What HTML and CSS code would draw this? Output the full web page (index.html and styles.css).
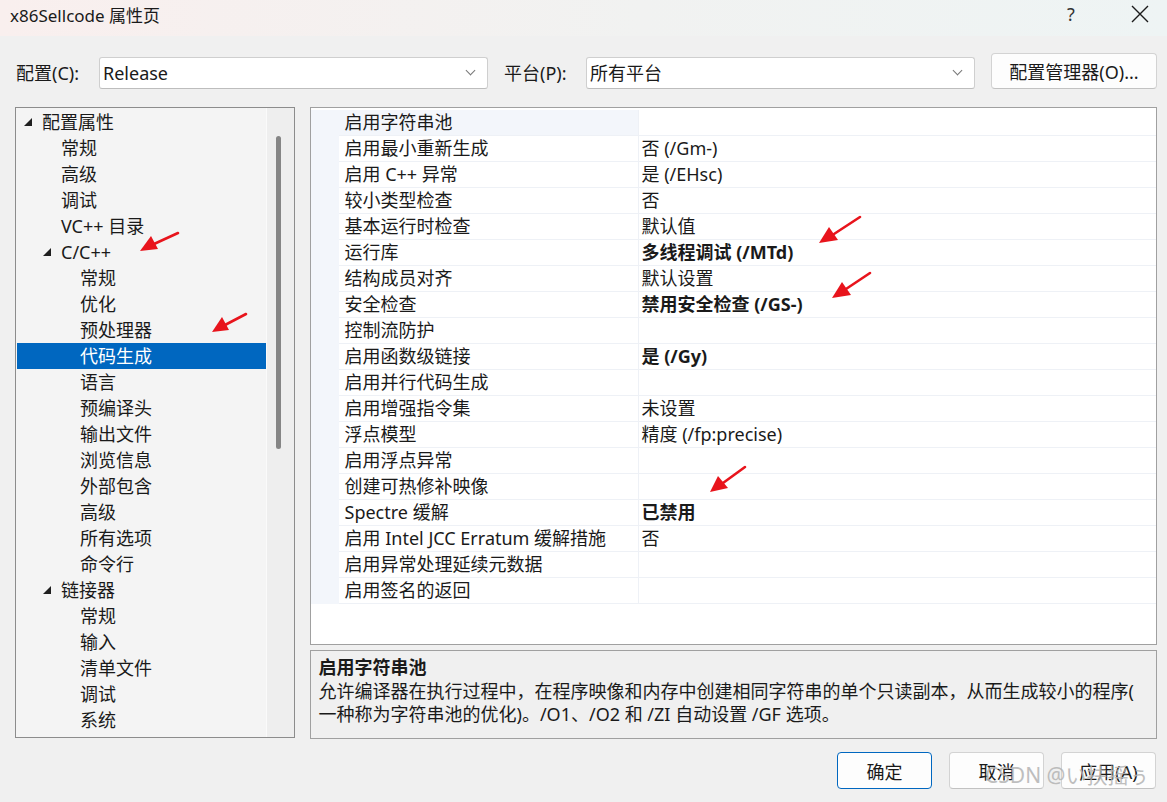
FILE: index.html
```html
<!DOCTYPE html>
<html lang="zh-CN">
<head>
  <meta charset="UTF-8">
  <title>x86Sellcode 属性页</title>
  <link rel="stylesheet" href="styles.css">
</head>
<body>

  <!-- 标题栏 -->
  <div class="titlebar">
    <span class="title">x86Sellcode 属性页</span>
    <span class="help">?</span>
    <span class="close">
      <svg width="18" height="18" viewBox="0 0 18 18"><path d="M1 1 L17 17 M17 1 L1 17" stroke="#1b1b1b" stroke-width="1.4" fill="none"/></svg>
    </span>
  </div>

  <!-- 配置 / 平台 -->
  <div class="toolbar">
    <label class="lbl">配置(C):</label>
    <div class="combo combo-cfg">Release<span class="chev"></span></div>
    <label class="lbl lbl-plat">平台(P):</label>
    <div class="combo combo-plat">所有平台<span class="chev"></span></div>
    <button class="btn btn-mgr">配置管理器(O)...</button>
  </div>

  <div class="main">
    <!-- 左侧树 -->
    <div class="tree">
      <ul class="tree-list">
        <li class="l0"><span class="tri"></span>配置属性</li>
        <li class="l1">常规</li>
        <li class="l1">高级</li>
        <li class="l1">调试</li>
        <li class="l1">VC++ 目录</li>
        <li class="l1"><span class="tri"></span>C/C++</li>
        <li class="l2">常规</li>
        <li class="l2">优化</li>
        <li class="l2">预处理器</li>
        <li class="l2 sel">代码生成</li>
        <li class="l2">语言</li>
        <li class="l2">预编译头</li>
        <li class="l2">输出文件</li>
        <li class="l2">浏览信息</li>
        <li class="l2">外部包含</li>
        <li class="l2">高级</li>
        <li class="l2">所有选项</li>
        <li class="l2">命令行</li>
        <li class="l1"><span class="tri"></span>链接器</li>
        <li class="l2">常规</li>
        <li class="l2">输入</li>
        <li class="l2">清单文件</li>
        <li class="l2">调试</li>
        <li class="l2">系统</li>
      </ul>
      <div class="vscroll"><div class="thumb"></div></div>
    </div>

    <!-- 右侧属性表 + 说明 -->
    <div class="right">
      <div class="grid">
        <div class="row cur"><span class="gut"></span><span class="name">启用字符串池</span><span class="val"></span></div>
        <div class="row"><span class="gut"></span><span class="name">启用最小重新生成</span><span class="val">否 (/Gm-)</span></div>
        <div class="row"><span class="gut"></span><span class="name">启用 C++ 异常</span><span class="val">是 (/EHsc)</span></div>
        <div class="row"><span class="gut"></span><span class="name">较小类型检查</span><span class="val">否</span></div>
        <div class="row"><span class="gut"></span><span class="name">基本运行时检查</span><span class="val">默认值</span></div>
        <div class="row"><span class="gut"></span><span class="name">运行库</span><span class="val b">多线程调试 (/MTd)</span></div>
        <div class="row"><span class="gut"></span><span class="name">结构成员对齐</span><span class="val">默认设置</span></div>
        <div class="row"><span class="gut"></span><span class="name">安全检查</span><span class="val b">禁用安全检查 (/GS-)</span></div>
        <div class="row"><span class="gut"></span><span class="name">控制流防护</span><span class="val"></span></div>
        <div class="row"><span class="gut"></span><span class="name">启用函数级链接</span><span class="val b">是 (/Gy)</span></div>
        <div class="row"><span class="gut"></span><span class="name">启用并行代码生成</span><span class="val"></span></div>
        <div class="row"><span class="gut"></span><span class="name">启用增强指令集</span><span class="val">未设置</span></div>
        <div class="row"><span class="gut"></span><span class="name">浮点模型</span><span class="val">精度 (/fp:precise)</span></div>
        <div class="row"><span class="gut"></span><span class="name">启用浮点异常</span><span class="val"></span></div>
        <div class="row"><span class="gut"></span><span class="name">创建可热修补映像</span><span class="val"></span></div>
        <div class="row"><span class="gut"></span><span class="name">Spectre 缓解</span><span class="val b">已禁用</span></div>
        <div class="row"><span class="gut"></span><span class="name">启用 Intel JCC Erratum 缓解措施</span><span class="val">否</span></div>
        <div class="row"><span class="gut"></span><span class="name">启用异常处理延续元数据</span><span class="val"></span></div>
        <div class="row"><span class="gut"></span><span class="name">启用签名的返回</span><span class="val"></span></div>
      </div>
      <div class="desc">
        <div class="desc-title">启用字符串池</div>
        <div class="desc-text">允许编译器在执行过程中，在程序映像和内存中创建相同字符串的单个只读副本，从而生成较小的程序(<br>一种称为字符串池的优化)。/O1、/O2 和 /ZI 自动设置 /GF 选项。</div>
      </div>
    </div>
  </div>

  <!-- 底部按钮 -->
  <div class="footer">
    <button class="btn btn-ok">确定</button>
    <button class="btn">取消</button>
    <button class="btn">应用(A)</button>
  </div>

  <!-- 截图上的标注箭头 -->
  <svg class="marks" width="1167" height="802" viewBox="0 0 1167 802">
    <g fill="#e8141c" stroke="#e8141c" stroke-width="2.6" stroke-linecap="round">
      <line x1="178" y1="233" x2="154" y2="244"/>
      <polygon points="140,251 151,236 158,249" stroke="none"/>
      <line x1="246" y1="314" x2="225" y2="325"/>
      <polygon points="212,332 222,317 229,330" stroke="none"/>
      <line x1="860" y1="217" x2="834" y2="234"/>
      <polygon points="819,243 829,227 838,240" stroke="none"/>
      <line x1="870" y1="273" x2="846" y2="289"/>
      <polygon points="832,298 842,282 851,295" stroke="none"/>
      <line x1="745" y1="467" x2="723" y2="483"/>
      <polygon points="710,492 718,476 728,488" stroke="none"/>
    </g>
  </svg>
  <div class="watermark">CSDN @い扶摇ぅ</div>

</body>
</html>
```

FILE: styles.css
```css
* {
  box-sizing: border-box;
}

body {
  margin: 0;
  width: 1167px;
  height: 802px;
  overflow: hidden;
  position: relative;
  background: #f0f0f0;
  color: #1a1a1a;
  font-family: "Noto Sans", "Noto Sans CJK SC", sans-serif;
  font-size: 18px;
}

/* 标题栏 */
.titlebar {
  height: 36px;
  display: flex;
  align-items: center;
  padding: 0 0 8px 10px;
  background: linear-gradient(to right, #f9efee, #f1f2f1 55%, #eef4f4);
}

.title {
  font-size: 17px;
  flex: 1;
}

.help {
  width: 46px;
  text-align: center;
  font-size: 18px;
  color: #333;
  margin-right: 23px;
}

.close {
  width: 46px;
  display: flex;
  justify-content: center;
  margin-right: 4px;
}

/* 配置行 */
.toolbar {
  display: flex;
  align-items: flex-start;
  padding: 21px 10px 0 16px;
}

.lbl {
  width: 83px;
  line-height: 32px;
}

.lbl-plat {
  margin-left: 16px;
  width: 82px;
}

.combo {
  position: relative;
  height: 32px;
  line-height: 30px;
  background: #fff;
  border: 1px solid #cfcfcf;
  border-bottom-color: #bdbdbd;
  border-radius: 3px;
  padding-left: 3px;
}

.combo-cfg {
  width: 389px;
}

.combo-plat {
  width: 389px;
}

.chev {
  position: absolute;
  right: 13px;
  top: 9px;
  width: 7px;
  height: 7px;
  border-right: 1px solid #777;
  border-bottom: 1px solid #777;
  transform: rotate(45deg);
}

.btn {
  font-family: inherit;
  font-size: 18px;
  color: #1a1a1a;
  background: #fdfdfd;
  border: 1px solid #d3d3d3;
  border-bottom-color: #c2c2c2;
  border-radius: 4px;
  padding: 0;
}

.btn-mgr {
  margin-left: auto;
  width: 166px;
  height: 36px;
  margin-top: -4px;
}

/* 主体 */
.main {
  display: flex;
  gap: 15px;
  padding: 18px 10px 0 15px;
}

.tree {
  width: 280px;
  height: 631px;
  border: 1px solid #8c8c8c;
  display: flex;
  background: #eeeeee;
}

.tree-list {
  list-style: none;
  margin: 0;
  padding: 1px 0 0 1px;
  width: 251px;
  background: #f4f4f4;
  border-right: 1px solid #fafafa;
}

.tree-list li {
  height: 26px;
  line-height: 26px;
  white-space: nowrap;
  position: relative;
}

.l0 { padding-left: 25px; }
.l1 { padding-left: 44px; }
.l2 { padding-left: 63px; }

.tree-list .sel {
  background: #0067c0;
  color: #fff;
}

.tri {
  position: absolute;
  top: 9px;
  width: 0;
  height: 0;
  border-left: 8px solid transparent;
  border-bottom: 8px solid #1f1f1f;
}

.l0 .tri { left: 7px; }
.l1 .tri { left: 26px; }

.vscroll {
  flex: 1;
  position: relative;
}

.thumb {
  position: absolute;
  left: 9px;
  top: 28px;
  width: 5px;
  height: 313px;
  border-radius: 3px;
  background: #858585;
}

/* 属性表 */
.right {
  width: 849px;
  display: flex;
  flex-direction: column;
  gap: 5px;
}

.grid {
  height: 538px;
  background: #fff;
  border: 1px solid #a0a0a0;
  padding-top: 2px;
}

.row {
  display: flex;
  height: 26px;
  line-height: 25px;
  white-space: nowrap;
}

.gut {
  width: 28px;
  background: #f3f6fb;
}

.name {
  width: 300px;
  padding-left: 6px;
  border-right: 1px solid #eef1f6;
  border-bottom: 1px solid #eef1f6;
}

.val {
  flex: 1;
  padding-left: 3px;
  border-bottom: 1px solid #eef1f6;
}

.cur .name {
  background: #f3f6fb;
}

.b {
  font-weight: bold;
}

/* 说明 */
.desc {
  height: 89px;
  border: 1px solid #a0a0a0;
  background: #f0f0f0;
  padding: 4px 8px 0 8px;
  white-space: nowrap;
}

.desc-title {
  font-weight: bold;
  line-height: 25px;
}

.desc-text {
  line-height: 23px;
}

/* 底部 */
.footer {
  display: flex;
  justify-content: flex-end;
  gap: 17px;
  padding: 13px 11px 0 0;
}

.footer .btn {
  width: 95px;
  height: 37px;
}

.footer .btn-ok {
  border: 1px solid #0067c0;
}

/* 标注 */
.marks {
  position: absolute;
  left: 0;
  top: 0;
  pointer-events: none;
}

.watermark {
  position: absolute;
  z-index: 3;
  left: 985px;
  top: 759px;
  font-size: 21px;
  color: #b4b4b4;
  opacity: 0.85;
  pointer-events: none;
}
```
